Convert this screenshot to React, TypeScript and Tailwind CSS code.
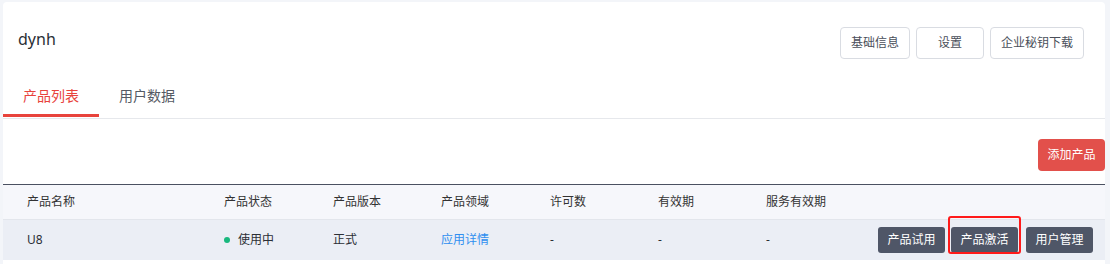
import React from 'react';

const font = { fontFamily: '"Noto Sans", "Noto Sans CJK SC", sans-serif' };

const columns = [
  { key: 'name', label: '产品名称', width: 'w-[197px]' },
  { key: 'status', label: '产品状态', width: 'w-[109px]' },
  { key: 'version', label: '产品版本', width: 'w-[108px]' },
  { key: 'domain', label: '产品领域', width: 'w-[109px]' },
  { key: 'license', label: '许可数', width: 'w-[108px]' },
  { key: 'expire', label: '有效期', width: 'w-[108px]' },
  { key: 'service', label: '服务有效期', width: 'w-[100px]' },
];

const TopButton: React.FC<{ label: string; width: string }> = ({ label, width }) => (
  <button
    className={`${width} h-[32px] rounded-[4px] border border-[#d9dce2] bg-white text-[12px] text-[#4a4f5a]`}
  >
    {label}
  </button>
);

const RowButton: React.FC<{ label: string }> = ({ label }) => (
  <button className="w-[67px] h-[26px] rounded-[3px] bg-[#4f5667] text-[12px] text-white">
    {label}
  </button>
);

export default function App() {
  return (
    <div className="h-[264px] overflow-hidden bg-[#f3f5f9] pl-[3px] pr-[5px] pt-[2px]" style={font}>
      <div className="h-[300px] rounded-tl-[4px] rounded-tr-[4px] bg-white">
        {/* header */}
        <div className="flex items-start justify-between pl-[15px] pr-[21px] pt-[25px]">
          <div className="text-[16px] leading-[24px] text-[#2b2f36]">dynh</div>
          <div className="flex gap-[6px]">
            <TopButton label="基础信息" width="w-[70px]" />
            <TopButton label="设置" width="w-[68px]" />
            <TopButton label="企业秘钥下载" width="w-[94px]" />
          </div>
        </div>

        {/* tabs */}
        <div className="mt-[26px] flex border-b border-[#e6e8ec]">
          <div className="relative flex h-[33px] items-start px-[20px] text-[14px] text-[#e8433c]">
            产品列表
            <span className="absolute bottom-[1px] left-0 right-0 h-[3px] bg-[#e8433c]" />
          </div>
          <div className="flex h-[33px] items-start px-[20px] text-[14px] text-[#555a64]">用户数据</div>
        </div>

        {/* toolbar */}
        <div className="flex justify-end pt-[20px]">
          <button className="h-[32px] w-[67px] rounded-[4px] bg-[#e2504b] text-[12px] text-white">
            添加产品
          </button>
        </div>

        {/* table */}
        <div className="mt-[13px] border-t border-[#4a5161]">
          <div className="flex h-[34px] items-center bg-[#f6f7fb] pl-[24px] text-[12px] text-[#333]">
            {columns.map((c) => (
              <div key={c.key} className={c.width}>
                {c.label}
              </div>
            ))}
          </div>
          <div className="flex h-[41px] items-center border-t border-[#e3e6ec] bg-[#ebeef5] pl-[24px] pr-[12px] text-[12px] text-[#2b2f36]">
            <div className="w-[197px]">U8</div>
            <div className="flex w-[109px] items-center gap-[8px]">
              <span className="h-[6px] w-[6px] rounded-full bg-[#19b87e]" />
              使用中
            </div>
            <div className="w-[108px]">正式</div>
            <div className="w-[109px] text-[#2f8ff0]">应用详情</div>
            <div className="w-[108px]">-</div>
            <div className="w-[108px]">-</div>
            <div className="w-[100px]">-</div>
            <div className="flex flex-1 justify-end">
              <div className="flex gap-[6px]">
                <RowButton label="产品试用" />
                <div className="relative">
                  <RowButton label="产品激活" />
                  <span className="pointer-events-none absolute -left-[3px] -right-[3px] -top-[11px] -bottom-[1px] rounded-[3px] border-2 border-[#ff1a1a]" />
                </div>
                <div className="pl-[2px]">
                  <RowButton label="用户管理" />
                </div>
              </div>
            </div>
          </div>
        </div>
      </div>
    </div>
  );
}
